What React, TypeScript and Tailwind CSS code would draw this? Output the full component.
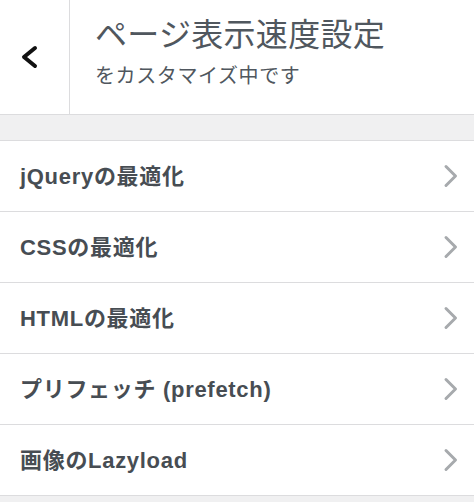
const items = [
  'jQueryの最適化',
  'CSSの最適化',
  'HTMLの最適化',
  'プリフェッチ (prefetch)',
  '画像のLazyload',
]

const font = { fontFamily: '"Liberation Sans", "Noto Sans CJK JP", sans-serif' }

function ChevronRight() {
  return (
    <svg width="16" height="24" viewBox="0 0 16 24" fill="none">
      <polyline points="3,2.5 12.5,12 3,21.5" stroke="#a7aaad" strokeWidth="3" strokeLinecap="round" strokeLinejoin="round" />
    </svg>
  )
}

export default function App() {
  return (
    <div className="w-[474px] h-[502px] bg-[#f0f0f1] overflow-hidden" style={font}>
      {/* Header */}
      <div className="flex h-[115px] bg-white border-b border-[#dcdcde]">
        <button className="w-[70px] flex items-center pl-[20px] border-r border-[#dcdcde]">
          <svg width="18" height="24" viewBox="0 0 18 24" fill="none">
            <polyline points="15,3 4,12 15,21" stroke="#111" strokeWidth="4" strokeLinecap="round" strokeLinejoin="round" />
          </svg>
        </button>
        <div className="flex flex-col pl-[25px] pt-[14px]">
          <h3 className="text-[32px] leading-[42px] font-normal text-[#50575e] tracking-[0.3px]">ページ表示速度設定</h3>
          <span className="text-[20px] leading-[28px] mt-[6px] text-[#50575e] tracking-[0.6px]">をカスタマイズ中です</span>
        </div>
      </div>

      {/* List */}
      <ul className="mt-[25px] border-t border-[#dcdcde]">
        {items.map((label) => (
          <li
            key={label}
            className="h-[71px] flex items-center justify-between pl-[20px] pr-[15px] bg-white border-b border-[#dcdcde]"
          >
            <span className="text-[22px] font-bold text-[#474d53] tracking-[0.7px]">{label}</span>
            <ChevronRight />
          </li>
        ))}
      </ul>
    </div>
  )
}
